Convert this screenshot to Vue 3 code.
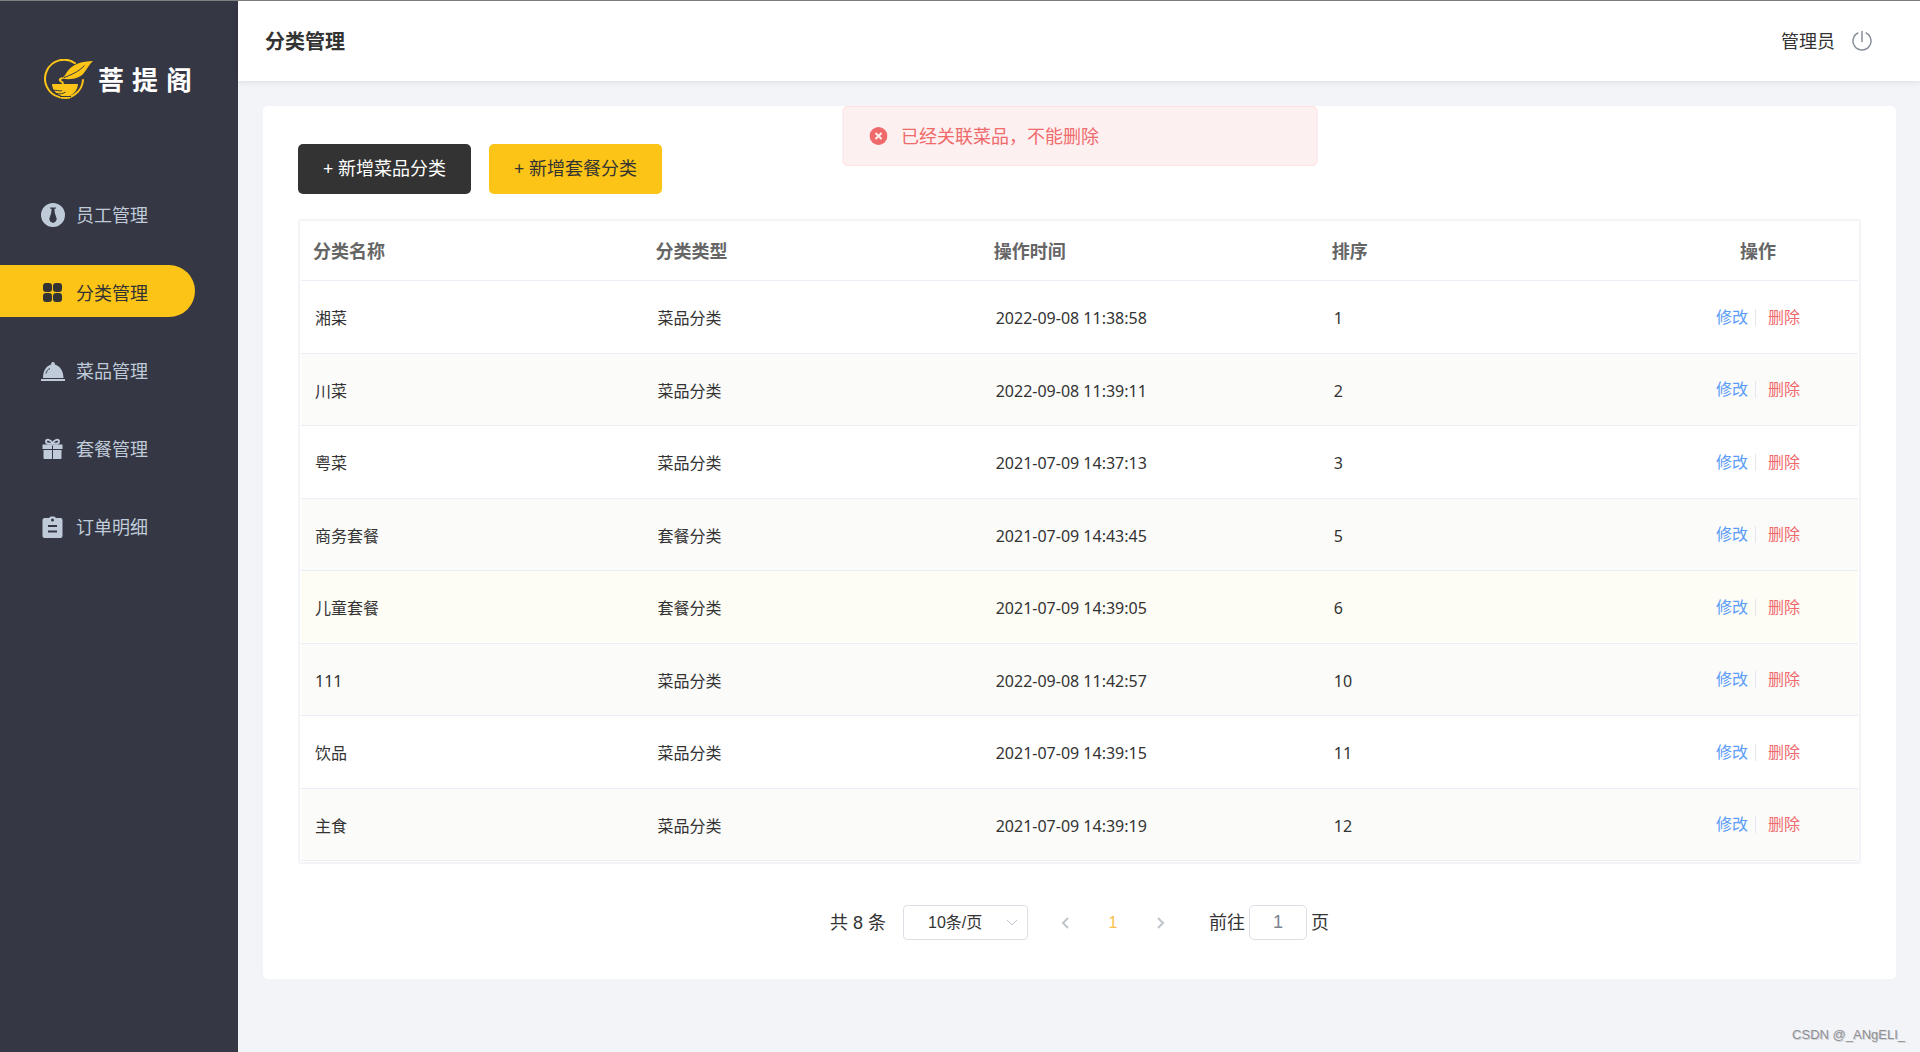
<script setup>
import { ref } from 'vue'

const menu = [
  { icon: 'staff', label: '员工管理' },
  { icon: 'grid', label: '分类管理' },
  { icon: 'dish', label: '菜品管理' },
  { icon: 'gift', label: '套餐管理' },
  { icon: 'order', label: '订单明细' },
]
const active = ref('grid')

const rows = [
  { name: '湘菜', type: '菜品分类', time: '2022-09-08 11:38:58', sort: 1 },
  { name: '川菜', type: '菜品分类', time: '2022-09-08 11:39:11', sort: 2 },
  { name: '粤菜', type: '菜品分类', time: '2021-07-09 14:37:13', sort: 3 },
  { name: '商务套餐', type: '套餐分类', time: '2021-07-09 14:43:45', sort: 5 },
  { name: '儿童套餐', type: '套餐分类', time: '2021-07-09 14:39:05', sort: 6 },
  { name: '111', type: '菜品分类', time: '2022-09-08 11:42:57', sort: 10 },
  { name: '饮品', type: '菜品分类', time: '2021-07-09 14:39:15', sort: 11 },
  { name: '主食', type: '菜品分类', time: '2021-07-09 14:39:19', sort: 12 },
]
const highlighted = ref(4)
const pageSize = ref('10')
const page = ref('1')
</script>

<template>
  <div class="app">
    <aside class="sidebar">
      <div class="logo">
        <svg class="logo-mark" width="50" height="42" viewBox="0 0 50 42" aria-hidden="true">
          <path d="M31 4.200A19 19 0 1 0 39 21" fill="none" stroke="#fbc416" stroke-width="2" stroke-linecap="round" />
          <path d="M49 2C38 2.500 30 4.500 24.500 11c-2.500 3-3.500 6-6.500 8.500 8 1.500 16.500.5 21.500-5C43 10.500 45 5.500 49 2Z" fill="#fbc416" />
          <path d="M20 18.500C27 16 35 12.500 40.500 6.500" fill="none" stroke="#363744" stroke-width="1" />
          <path d="M18.500 19c-2.500.8-3.500 2-2 3s3 1.200 2 3" fill="none" stroke="#fbc416" stroke-width="2" />
          <path d="M8 25h26c-.5 6-3.500 9.500-8 11.500v3h-9v-3C11.500 34.500 8.500 31 8 25Z" fill="#fbc416" />
          <path d="M9 31.500c3-.8 5.500.8 9 .3M12 34.500c4 .8 7 .3 9.500-1.500M16 37.500h11" fill="none" stroke="#363744" stroke-width="1" />
        </svg>
        <span class="logo-name"><span>菩</span><span>提</span><span>阁</span></span>
      </div>
      <nav class="menu">
        <a
          v-for="item in menu"
          :key="item.icon"
          href="#"
          class="menu-item"
          :class="{ active: item.icon === active }"
          @click.prevent="active = item.icon"
        >
          <svg width="24" height="24" viewBox="0 0 24 24" fill="currentColor" aria-hidden="true">
            <path v-if="item.icon === 'staff'" fill-rule="evenodd" d="M12 0a12 12 0 1 0 0 24 12 12 0 0 0 0-24ZM8.800 4.500h6.400l-.6 1.300h-1.200l.4 4.200 2 6-1 2.500-2.800 1.500-2.800-1.500-1-2.500 2-6 .4-4.200H9.400Z" />
            <g v-else-if="item.icon === 'grid'">
              <rect x="2" y="2" width="9" height="9" rx="3" />
              <rect x="12" y="2" width="9" height="9" rx="3" />
              <rect x="2" y="12" width="9" height="9" rx="3" />
              <rect x="12" y="12" width="9" height="9" rx="3" />
            </g>
            <g v-else-if="item.icon === 'dish'">
              <path d="M2 19c0-7 3-12 8.200-13.500a1.900 1.900 0 1 1 3.600 0C19 7 22.500 12 22.500 19Z" />
              <rect y="20" width="24" height="2" />
              <path d="M5 14.500c.5-2.500 2-4.200 4-5" fill="none" stroke="#363744" stroke-width="1" />
            </g>
            <g v-else-if="item.icon === 'gift'">
              <path d="M11.500 6.500C10 2.500 5 1.500 5 4.500s4 2 6.500 2c2.500 0 6.500 1 6.500-2s-5-2-6.500 2Z" fill="none" stroke="currentColor" stroke-width="2" />
              <path d="M1.500 7.500h9.500v4.500H1.500ZM12 7.500h9.500v4.500H12ZM2.500 13H11v9H3.500a1 1 0 0 1-1-1ZM12 13h8.500v8a1 1 0 0 1-1 1H12Z" />
            </g>
            <g v-else>
              <path d="M3.500 3H8l1.500-1.500h4L15 3h4.500a2 2 0 0 1 2 2v16a2 2 0 0 1-2 2h-16a2 2 0 0 1-2-2V5a2 2 0 0 1 2-2Z" />
              <circle cx="11.500" cy="5" r="1.500" fill="#363744" />
              <path d="M7 11h9M7 16.500h9" stroke="#363744" stroke-width="2" />
            </g>
          </svg>
          <span>{{ item.label }}</span>
        </a>
      </nav>
    </aside>

    <div class="content">
      <header class="topbar">
        <h1>分类管理</h1>
        <div class="user">
          <span>管理员</span>
          <button type="button" class="power" aria-label="退出">
            <svg width="20" height="20" viewBox="0 0 20 20" fill="none" stroke="#8a8f9c" stroke-width="1.500">
              <path d="M6.300 1.800a9 9 0 1 0 7.400 0M10 0v11" />
            </svg>
          </button>
        </div>
      </header>

      <main class="card">
        <div class="toolbar">
          <button type="button" class="btn dark">+ 新增菜品分类</button>
          <button type="button" class="btn gold">+ 新增套餐分类</button>
        </div>

        <div class="table-box">
          <table>
            <colgroup>
              <col class="col-name" /><col /><col /><col /><col class="col-ops" />
            </colgroup>
            <thead>
              <tr>
                <th>分类名称</th>
                <th>分类类型</th>
                <th>操作时间</th>
                <th>排序</th>
                <th class="ops-head">操作</th>
              </tr>
            </thead>
            <tbody>
              <tr v-for="(row, i) in rows" :key="row.sort" :class="{ hover: i === highlighted }">
                <td>{{ row.name }}</td>
                <td>{{ row.type }}</td>
                <td>{{ row.time }}</td>
                <td>{{ row.sort }}</td>
                <td class="ops-cell">
                  <div class="ops">
                    <button type="button" class="edit">修改</button>
                    <button type="button" class="remove">删除</button>
                  </div>
                </td>
              </tr>
            </tbody>
          </table>
        </div>

        <div class="pager">
          <span>共 8 条</span>
          <div class="size">
            <select v-model="pageSize" aria-label="每页条数">
              <option value="10">10条/页</option>
              <option value="20">20条/页</option>
            </select>
            <svg width="12" height="8" viewBox="0 0 12 8" fill="none" stroke="#c0c4cc"><path d="m1 1 5 5 5-5" /></svg>
          </div>
          <div class="pages">
            <button type="button" aria-label="上一页">
              <svg width="8" height="12" viewBox="0 0 8 12" fill="none" stroke="#c0c4cc" stroke-width="2"><path d="M7 1 2 6l5 5" /></svg>
            </button>
            <button type="button" class="current">1</button>
            <button type="button" aria-label="下一页">
              <svg width="8" height="12" viewBox="0 0 8 12" fill="none" stroke="#c0c4cc" stroke-width="2"><path d="m1 1 5 5-5 5" /></svg>
            </button>
          </div>
          <label class="jump">前往<input v-model="page" type="text" />页</label>
        </div>

        <div class="message" role="alert">
          <svg width="18" height="18" viewBox="0 0 18 18" aria-hidden="true">
            <circle cx="9" cy="9" r="9" fill="#f06a6c" />
            <path d="m6 6 6 6m0-6-6 6" stroke="#fdf0f0" stroke-width="2" />
          </svg>
          <span>已经关联菜品，不能删除</span>
        </div>
      </main>
    </div>

    <div class="watermark">CSDN @_ANgELI_</div>
  </div>
</template>

<style>
body {
  background: #f3f4f8;
}
</style>

<style scoped>
.app {
  position: relative;
  display: flex;
  box-sizing: border-box;
  min-height: 100vh;
  border-top: 1px solid #808080;
  font-family: "Noto Sans", "Noto Sans CJK SC", sans-serif;
  font-size: 18px;
  line-height: 24px;
  color: #333;
}
button,
input,
select {
  margin: 0;
  padding: 0;
  border: 0;
  background: none;
  font: inherit;
  color: inherit;
}
button {
  cursor: pointer;
}

.sidebar {
  flex: none;
  width: 238px;
  background: #363744;
}
.logo {
  display: flex;
  align-items: center;
  gap: 4px;
  padding: 58px 0 0 44px;
}
.logo-name {
  display: flex;
  gap: 8px;
  font-size: 26px;
  font-weight: 700;
  line-height: 40px;
  color: #fff;
}
.menu {
  display: flex;
  flex-direction: column;
  gap: 26px;
  margin: 86px 43px 0 0;
}
.menu-item {
  display: flex;
  align-items: center;
  gap: 11px;
  box-sizing: border-box;
  height: 52px;
  padding: 3px 0 0 41px;
  border-radius: 0 26px 26px 0;
  color: #bfcbd9;
  text-decoration: none;
}
.menu-item.active {
  background: #fbc416;
  color: #333;
}

.content {
  flex: 1;
  min-width: 0;
  background: #f3f4f8;
}
.topbar {
  display: flex;
  align-items: center;
  justify-content: space-between;
  height: 80px;
  padding: 0 48px 0 27px;
  background: #fff;
  box-shadow: 0 1px 6px rgba(0, 20, 10, 0.1);
}
h1 {
  margin: 0;
  padding-top: 2px;
  font-size: 20px;
  font-weight: 700;
}
.user {
  display: flex;
  align-items: center;
  gap: 17px;
}
.power {
  display: flex;
}

.card {
  position: relative;
  margin: 25px 24px 0 25px;
  padding: 38px 35px 39px;
  border-radius: 5px;
  background: #fff;
}
.toolbar {
  display: flex;
  gap: 18px;
  margin-bottom: 25px;
}
.btn {
  height: 50px;
  padding: 0 25px 2px;
  border-radius: 5px;
}
.dark {
  background: #333;
  color: #fff;
}
.gold {
  background: #fbc416;
}

.table-box {
  padding: 1px;
  border: 2px solid #f3f4f8;
  border-radius: 3px;
}
table {
  width: 100%;
  table-layout: fixed;
  border-collapse: separate;
  border-spacing: 0;
}
.col-name {
  width: 22%;
}
.col-ops {
  width: 200px;
}
th,
td {
  box-sizing: border-box;
  height: 73px;
  border-bottom: 1px solid #ebeef5;
  text-align: left;
}
th {
  height: 59px;
  padding: 0 12px;
  font-weight: 700;
  color: #666;
}
td {
  padding: 2px 14px 0;
  font-size: 16px;
}
tbody tr:nth-child(even) td {
  height: 72px;
  background: #fbfbfa;
}
tbody tr.hover td {
  background: #fdfcf5;
}
.ops-head {
  text-align: center;
}
.ops-cell {
  padding: 0;
}
.ops {
  display: flex;
  justify-content: center;
}
.edit {
  padding-right: 7px;
  border-right: 1px solid #e4e7ed;
  color: #5a9cf8;
  line-height: 17px;
}
.remove {
  padding-left: 12px;
  color: #f06a6c;
  line-height: 17px;
}

.pager {
  display: flex;
  align-items: center;
  justify-content: center;
  margin-top: 41px;
  font-family: "Liberation Sans", "Noto Sans CJK SC", sans-serif;
}
.size {
  display: flex;
  align-items: center;
  box-sizing: border-box;
  width: 125px;
  height: 35px;
  margin: 0 13px 0 17px;
  padding-right: 9px;
  border: 1px solid #dcdfe6;
  border-radius: 4px;
}
.size select {
  flex: 1;
  height: 33px;
  padding-left: 24px;
  appearance: none;
  font-size: 16px;
  outline: none;
}
.size svg {
  flex: none;
}
.pages {
  display: flex;
  margin-right: 24px;
}
.pages button {
  display: flex;
  align-items: center;
  justify-content: center;
  width: 48px;
  height: 35px;
  font-size: 16px;
}
.pages .current {
  color: #fbc04a;
}
.jump {
  display: flex;
  align-items: center;
  gap: 4px;
}
.jump input {
  box-sizing: border-box;
  width: 58px;
  height: 35px;
  border: 1px solid #dcdfe6;
  border-radius: 5px;
  text-align: center;
  color: #808490;
}

/* Floats over the top edge of the card */
.message {
  position: absolute;
  top: 0;
  left: 50%;
  display: flex;
  align-items: center;
  gap: 14px;
  box-sizing: border-box;
  width: 475px;
  height: 60px;
  padding-left: 26px;
  border: 1px solid #fde2e2;
  border-radius: 5px;
  transform: translateX(-50%);
  background: #fdf0f0;
  color: #f06a6c;
}

.watermark {
  position: absolute;
  right: 15px;
  bottom: 7px;
  font-family: "Liberation Sans", sans-serif;
  font-size: 13px;
  line-height: 20px;
  color: #8f9094;
  text-shadow: 1px 1px 0 #d0d1d5;
}
</style>
